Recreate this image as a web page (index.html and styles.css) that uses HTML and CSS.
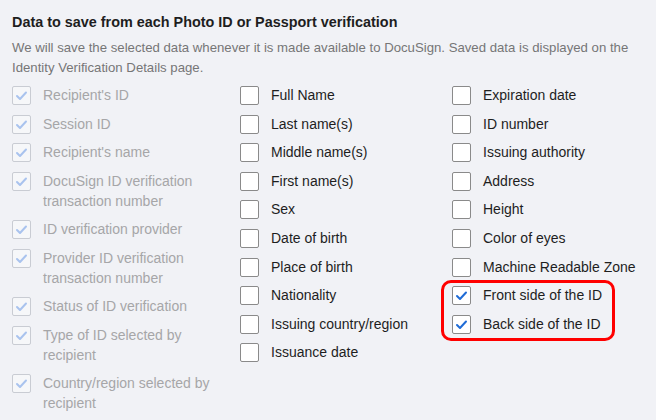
FILE: index.html
```html
<!DOCTYPE html>
<html lang="en">
<head>
<meta charset="utf-8">
<title>Data to save</title>
<link rel="stylesheet" href="styles.css">
</head>
<body>
<section class="panel">
  <h2 class="title">Data to save from each Photo ID or Passport verification</h2>
  <p class="desc">We will save the selected data whenever it is made available to DocuSign. Saved data is displayed on the Identity Verification Details page.</p>
  <div class="grid">
    <ul class="col col-1">
      <li class="item disabled checked"><span class="box"><svg viewBox="0 0 19 19"><path d="M5 10l3 3 6-6.5"/></svg></span><span class="label">Recipient's ID</span></li>
      <li class="item disabled checked"><span class="box"><svg viewBox="0 0 19 19"><path d="M5 10l3 3 6-6.5"/></svg></span><span class="label">Session ID</span></li>
      <li class="item disabled checked"><span class="box"><svg viewBox="0 0 19 19"><path d="M5 10l3 3 6-6.5"/></svg></span><span class="label">Recipient's name</span></li>
      <li class="item disabled checked"><span class="box"><svg viewBox="0 0 19 19"><path d="M5 10l3 3 6-6.5"/></svg></span><span class="label">DocuSign ID verification transaction number</span></li>
      <li class="item disabled checked"><span class="box"><svg viewBox="0 0 19 19"><path d="M5 10l3 3 6-6.5"/></svg></span><span class="label">ID verification provider</span></li>
      <li class="item disabled checked"><span class="box"><svg viewBox="0 0 19 19"><path d="M5 10l3 3 6-6.5"/></svg></span><span class="label">Provider ID verification transaction number</span></li>
      <li class="item disabled checked"><span class="box"><svg viewBox="0 0 19 19"><path d="M5 10l3 3 6-6.5"/></svg></span><span class="label">Status of ID verification</span></li>
      <li class="item disabled checked"><span class="box"><svg viewBox="0 0 19 19"><path d="M5 10l3 3 6-6.5"/></svg></span><span class="label">Type of ID selected by recipient</span></li>
      <li class="item disabled checked"><span class="box"><svg viewBox="0 0 19 19"><path d="M5 10l3 3 6-6.5"/></svg></span><span class="label">Country/region selected by recipient</span></li>
    </ul>
    <ul class="col col-2">
      <li class="item"><span class="box"></span><span class="label">Full Name</span></li>
      <li class="item"><span class="box"></span><span class="label">Last name(s)</span></li>
      <li class="item"><span class="box"></span><span class="label">Middle name(s)</span></li>
      <li class="item"><span class="box"></span><span class="label">First name(s)</span></li>
      <li class="item"><span class="box"></span><span class="label">Sex</span></li>
      <li class="item"><span class="box"></span><span class="label">Date of birth</span></li>
      <li class="item"><span class="box"></span><span class="label">Place of birth</span></li>
      <li class="item"><span class="box"></span><span class="label">Nationality</span></li>
      <li class="item"><span class="box"></span><span class="label">Issuing country/region</span></li>
      <li class="item"><span class="box"></span><span class="label">Issuance date</span></li>
    </ul>
    <ul class="col col-3">
      <li class="item"><span class="box"></span><span class="label">Expiration date</span></li>
      <li class="item"><span class="box"></span><span class="label">ID number</span></li>
      <li class="item"><span class="box"></span><span class="label">Issuing authority</span></li>
      <li class="item"><span class="box"></span><span class="label">Address</span></li>
      <li class="item"><span class="box"></span><span class="label">Height</span></li>
      <li class="item"><span class="box"></span><span class="label">Color of eyes</span></li>
      <li class="item"><span class="box"></span><span class="label">Machine Readable Zone</span></li>
      <li class="group">
        <ul class="group-list">
          <li class="item checked"><span class="box"><svg viewBox="0 0 19 19"><path d="M5 10l3 3 6-6.5"/></svg></span><span class="label">Front side of the ID</span></li>
          <li class="item checked"><span class="box"><svg viewBox="0 0 19 19"><path d="M5 10l3 3 6-6.5"/></svg></span><span class="label">Back side of the ID</span></li>
        </ul>
        <span class="highlight" aria-hidden="true"></span>
      </li>
    </ul>
  </div>
</section>
</body>
</html>
```
FILE: styles.css
```css
html, body {
  margin: 0;
  padding: 0;
  background: #f1f2f6;
}
body {
  font-family: "Liberation Sans", Arial, sans-serif;
  color: #1e1e1e;
  width: 656px;
  height: 420px;
  overflow: hidden;
}
.panel {
  padding: 12px 12px 0 12px;
}
.title {
  margin: 0;
  font-size: 14.4px;
  line-height: 20px;
  font-weight: bold;
  color: #1e1e1e;
}
.desc {
  margin: 6px 0 0 0;
  font-size: 13.2px;
  line-height: 19.5px;
  color: #767676;
}
.grid {
  margin-top: 9px;
  display: grid;
  grid-template-columns: 228px 212px 1fr;
}
.col, .group-list {
  list-style: none;
  margin: 0;
  padding: 0;
  display: flex;
  flex-direction: column;
  gap: 8.8px;
}
.item {
  display: flex;
  align-items: flex-start;
  gap: 12px;
  font-size: 14px;
  line-height: 19.8px;
}
.label {
  flex: 1;
  min-width: 0;
}
.col-1 .label {
  max-width: 180px;
}
.box {
  flex: none;
  width: 17px;
  height: 17px;
  border: 1px solid #8a8a8a;
  border-radius: 2px;
  background: #ffffff;
  display: flex;
  align-items: center;
  justify-content: center;
}
.box svg {
  width: 19px;
  height: 19px;
  margin: -1px;
  fill: none;
  stroke: #1f6bd6;
  stroke-width: 2;
  stroke-linecap: round;
  stroke-linejoin: round;
}
.disabled {
  color: #a6a6a8;
}
.disabled .box {
  border-color: #c9ccd3;
  background: #f6f7f9;
}
.disabled .box svg {
  stroke: #a9c3ee;
}
.group {
  position: relative;
}
.highlight {
  position: absolute;
  left: -11px;
  top: -6px;
  width: 168px;
  height: 55px;
  border: 3px solid #ff0000;
  border-radius: 10px;
  pointer-events: none;
}
```
